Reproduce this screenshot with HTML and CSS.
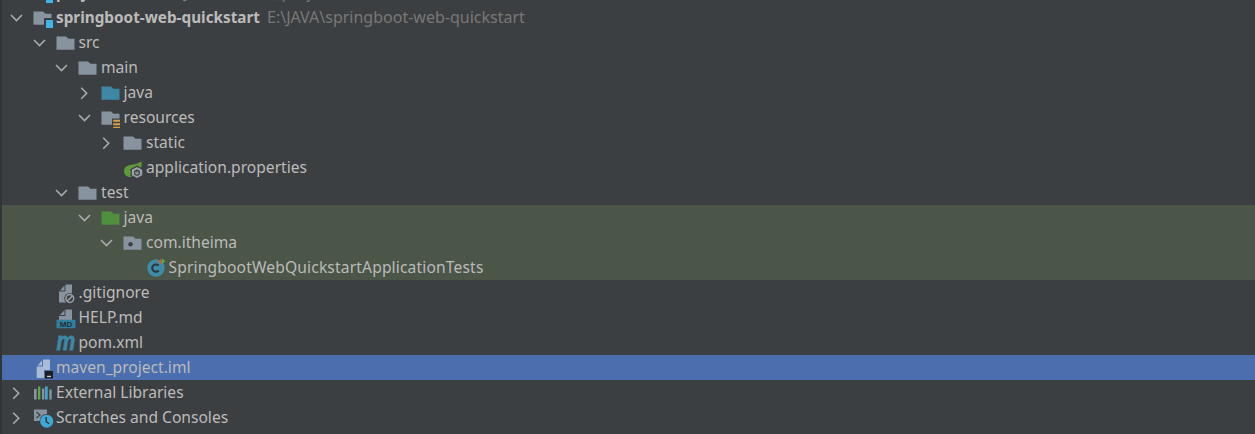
FILE: index.html
```html
<!DOCTYPE html>
<html>
<head>
  <meta charset="UTF-8">
  <title>Project</title>
  <link rel="stylesheet" href="styles.css">
</head>
<body>
  <svg class="defs" width="0" height="0">
    <symbol id="open" viewBox="0 0 24 20"><path d="M3 7l5.500 5.500L14 7" fill="none" stroke="#a8abae" stroke-width="1.600"/></symbol>
    <symbol id="closed" viewBox="0 0 24 20"><path d="M5.200 4.700l5.500 5.500-5.500 5.500" fill="none" stroke="#a8abae" stroke-width="1.600"/></symbol>
    <symbol id="folder" viewBox="0 0 20 20"><path d="M1.500 3.500H11l2.500 2.300h6v10.900h-18z"/></symbol>
    <symbol id="res" viewBox="0 0 20 20"><path fill="#87939e" d="M1.500 3.500H11l2.500 2.300h6v4.700H12v6.200H1.500z"/><path fill="#d9a343" d="M13.200 11.800h7.300v2h-7.300zM13.200 15.300h7.300v2h-7.300zM13.200 18.800h7.300v2h-7.300z"/></symbol>
    <symbol id="pkg" viewBox="0 0 20 20"><path fill="#87939e" d="M1.500 3.500H11l2.500 2.300h6v10.900h-18z"/><circle cx="8.500" cy="11.300" r="2.200" fill="#3c3f41"/></symbol>
    <symbol id="spring" viewBox="0 0 20 20" overflow="visible"><path fill="#5c9a3c" d="M2 13C2 8 7 7 11 6.500c3-.5 6-1 8.500-3.200.5 3.500 0 6-1 8.500l-8 7.200C6 19.500 2 18 2 13z"/><path fill="#3c3f41" d="M15 7.500l6.500 3.500v7L15 21.500 8.500 18v-7z"/><path fill="#9aa2a8" d="M15 9l5.200 2.800v5.400L15 20l-5.200-2.800v-5.400z"/><circle cx="15" cy="14.700" r="2.400" fill="none" stroke="#3c3f41" stroke-width="1.200"/><path d="M15 11.500v3" stroke="#3c3f41" stroke-width="1.200"/></symbol>
    <symbol id="cls" viewBox="0 0 20 20" overflow="visible"><circle cx="11" cy="10" r="8.700" fill="#3e8ba8"/><path d="M13.700 7.700a3.700 3.700 0 1 0 0 4.800" fill="none" stroke="#2f3436" stroke-width="2"/><path fill="#d8602f" d="M13 3.500l3.500-3v6z"/><path fill="#59a84a" d="M17 .5l3.500 2.800L17 6z"/></symbol>
    <symbol id="ignore" viewBox="0 0 20 20" overflow="visible"><path fill="#87939e" d="M4 19.500V8.500h6.500V1.500H17v10h-5v8z"/><path fill="#87939e" d="M5 7.500l4.500-5v5z"/><circle cx="14.800" cy="15.500" r="5.500" fill="#3c3f41"/><circle cx="14.800" cy="15.500" r="3.900" fill="none" stroke="#9aa2a8" stroke-width="1.500"/><path d="M12 18.300l5.600-5.600" stroke="#9aa2a8" stroke-width="1.500"/></symbol>
    <symbol id="md" viewBox="0 0 20 20" overflow="visible"><path fill="#87939e" d="M4 12V8h6.500V1.500H17V12z"/><path fill="#87939e" d="M5 7l4.500-5v5z"/><rect x="1.500" y="11.800" width="19" height="8.400" fill="#2f7f9f"/><text x="11" y="18.700" class="md-text">MD</text></symbol>
    <symbol id="iml" viewBox="0 0 20 20" overflow="visible"><path fill="#a9bcd6" d="M4.700 20V8.500H11V1.500h7V20z"/><path fill="#a9bcd6" d="M5.700 7.500L10 2.500v5z"/><rect x="12" y="12" width="10" height="9.500" fill="#4b6eaf"/><rect x="13" y="13" width="8" height="7.500" fill="#1e1e1e"/><rect x="15" y="17.800" width="4" height="1.300" fill="#d0d0d0"/></symbol>
    <symbol id="libs" viewBox="0 0 20 20"><path fill="#87939e" d="M2 6h2.700v10.500H2z"/><path fill="#5fa84a" d="M6 3.500h2.300v13H6z"/><path fill="#87939e" d="M10 5.500h2.300v11H10z"/><path fill="#3fa7d6" d="M13 3.500h2.700v13H13z"/><path fill="#87939e" d="M17.300 6.500h2.400v10h-2.400z"/></symbol>
    <symbol id="scratch" viewBox="0 0 20 20" overflow="visible"><rect x="2" y="1.500" width="13" height="11.500" fill="#87939e"/><path d="M4.500 4l3.500 3-3.500 3" fill="none" stroke="#3c3f41" stroke-width="1.200"/><circle cx="14.700" cy="13.200" r="7.200" fill="#3c3f41"/><circle cx="14.700" cy="13.200" r="6.500" fill="#3fa7d6"/><path d="M14.200 9v4.700l3 2" fill="none" stroke="#2b2d2f" stroke-width="1.300"/></symbol>
  </svg>

  <div class="tree">
    <div class="row lv0">
      <span class="arrow"></span>
      <span class="icon-wrap">
        <svg class="icon project-icon"><use href="#folder"/></svg>
        <i class="module-badge"></i>
      </span>
      <span class="label bold">project-demo</span>
      <span class="path">E:\JAVA\maven_project</span>
    </div>
    <div class="row lv0">
      <svg class="arrow"><use href="#open"/></svg>
      <span class="icon-wrap">
        <svg class="icon project-icon"><use href="#folder"/></svg>
        <i class="module-badge"></i>
      </span>
      <span class="label bold">springboot-web-quickstart</span>
      <span class="path">E:\JAVA\springboot-web-quickstart</span>
    </div>
    <div class="row lv1">
      <svg class="arrow"><use href="#open"/></svg>
      <svg class="icon project-icon"><use href="#folder"/></svg>
      <span class="label">src</span>
    </div>
    <div class="row lv2">
      <svg class="arrow"><use href="#open"/></svg>
      <svg class="icon project-icon"><use href="#folder"/></svg>
      <span class="label">main</span>
    </div>
    <div class="row lv3">
      <svg class="arrow"><use href="#closed"/></svg>
      <svg class="icon source-icon"><use href="#folder"/></svg>
      <span class="label">java</span>
    </div>
    <div class="row lv3">
      <svg class="arrow"><use href="#open"/></svg>
      <svg class="icon"><use href="#res"/></svg>
      <span class="label">resources</span>
    </div>
    <div class="row lv4">
      <svg class="arrow"><use href="#closed"/></svg>
      <svg class="icon project-icon"><use href="#folder"/></svg>
      <span class="label">static</span>
    </div>
    <div class="row lv4">
      <span class="arrow"></span>
      <svg class="icon"><use href="#spring"/></svg>
      <span class="label">application.properties</span>
    </div>
    <div class="row lv2">
      <svg class="arrow"><use href="#open"/></svg>
      <svg class="icon project-icon"><use href="#folder"/></svg>
      <span class="label">test</span>
    </div>
    <div class="row lv3 tested">
      <svg class="arrow"><use href="#open"/></svg>
      <svg class="icon test-icon"><use href="#folder"/></svg>
      <span class="label">java</span>
    </div>
    <div class="row lv4 tested">
      <svg class="arrow"><use href="#open"/></svg>
      <svg class="icon"><use href="#pkg"/></svg>
      <span class="label">com.itheima</span>
    </div>
    <div class="row lv5 tested">
      <span class="arrow"></span>
      <svg class="icon"><use href="#cls"/></svg>
      <span class="label wide">SpringbootWebQuickstartApplicationTests</span>
    </div>
    <div class="row lv1">
      <span class="arrow"></span>
      <svg class="icon"><use href="#ignore"/></svg>
      <span class="label">.gitignore</span>
    </div>
    <div class="row lv1">
      <span class="arrow"></span>
      <svg class="icon"><use href="#md"/></svg>
      <span class="label">HELP.md</span>
    </div>
    <div class="row lv1">
      <span class="arrow"></span>
      <span class="icon maven-m">m</span>
      <span class="label">pom.xml</span>
    </div>
    <div class="row lv0 selected">
      <span class="arrow"></span>
      <svg class="icon"><use href="#iml"/></svg>
      <span class="label">maven_project.iml</span>
    </div>
    <div class="row lv0">
      <svg class="arrow"><use href="#closed"/></svg>
      <svg class="icon"><use href="#libs"/></svg>
      <span class="label">External Libraries</span>
    </div>
    <div class="row lv0">
      <svg class="arrow"><use href="#closed"/></svg>
      <svg class="icon"><use href="#scratch"/></svg>
      <span class="label">Scratches and Consoles</span>
    </div>
  </div>
</body>
</html>
```

FILE: styles.css
```css
html, body {
  margin: 0;
  height: 100%;
  overflow: hidden;
  background: #3c3f41;
}
.defs {
  display: block;
  height: 0;
}
.tree {
  height: 454px;
  margin-top: -20px;
  border-left: 2px solid #323435;
  font-family: "Noto Sans", "Open Sans", sans-serif;
  font-size: 15.600px;
  color: #bbbbbb;
}
.row {
  display: flex;
  align-items: center;
  height: 25px;
  white-space: nowrap;
}
.lv0 { padding-left: 6px; }
.lv1 { padding-left: 28.500px; }
.lv2 { padding-left: 51px; }
.lv3 { padding-left: 73.500px; }
.lv4 { padding-left: 96px; }
.lv5 { padding-left: 118.500px; }
.tested { background: #4b5548; }
.selected { background: #4b6eaf; }
.arrow {
  display: block;
  flex: none;
  width: 24px;
  height: 20px;
}
.icon {
  display: block;
  flex: none;
  width: 20px;
  height: 20px;
  overflow: visible;
}
.project-icon { fill: #87939e; }
.source-icon { fill: #3d88a5; }
.test-icon { fill: #4f8f3d; }
.icon-wrap {
  position: relative;
  flex: none;
  width: 20px;
  height: 20px;
}
.module-badge {
  position: absolute;
  right: -1.300px;
  bottom: 0;
  width: 7.500px;
  height: 7.500px;
  background: #3fb4e8;
  border: 0 solid #3c3f41;
  border-width: 2px 0 0 2px;
}
.label {
  margin: -2px 0 0 4px;
}
.wide { letter-spacing: 0.150px; }
.bold {
  font-size: 15.300px;
  font-weight: 700;
}
.path {
  margin: -2px 0 0 7px;
  font-size: 16px;
  color: #787878;
}
.maven-m {
  font-family: "Liberation Sans", sans-serif;
  font-size: 25px;
  font-style: italic;
  font-weight: 700;
  line-height: 20px;
  color: #3d88a5;
  -webkit-text-stroke: 0.800px #3d88a5;
  transform: translate(1.500px, -2px) scaleX(0.840);
  transform-origin: left center;
}
.md-text {
  font-family: "Liberation Sans", sans-serif;
  font-size: 8px;
  font-weight: 700;
  fill: #2b2d2f;
  text-anchor: middle;
}
```
